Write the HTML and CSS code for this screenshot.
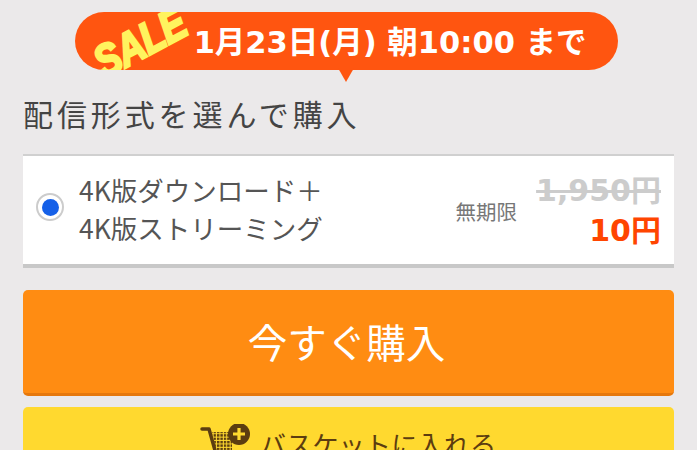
FILE: index.html
```html
<!DOCTYPE html>
<html lang="ja">
<head>
<meta charset="utf-8">
<title>購入</title>
<link rel="stylesheet" href="styles.css">
</head>
<body>
<div class="page">
  <div class="banner">
    <span class="sale-wrap"><span class="sale">SALE</span></span>
    <span class="banner-text">1月23日(月) 朝10:00 まで</span>
  </div>
  <h2 class="heading">配信形式を選んで購入</h2>
  <div class="card">
    <span class="radio"><span class="radio-dot"></span></span>
    <div class="name"><div>4K版ダウンロード＋</div><div>4K版ストリーミング</div></div>
    <div class="period">無期限</div>
    <div class="prices"><div class="old">1,950円</div><div class="new">10円</div></div>
  </div>
  <div class="btn buy">今すぐ購入</div>
  <div class="btn basket">
    <svg class="cart" viewBox="0 0 52 44" width="52" height="44" aria-hidden="true">
      <defs>
        <pattern id="dots" width="3.4" height="3.4" patternUnits="userSpaceOnUse">
          <rect width="2.4" height="2.4" fill="#5c3d10"/>
        </pattern>
      </defs>
      <path d="M2 5h7l7 25h22" fill="none" stroke="#5c3d10" stroke-width="3.5" stroke-linecap="round" stroke-linejoin="round"/>
      <path d="M12 8h20v18H16z" fill="url(#dots)"/>
      <circle cx="18" cy="36" r="3.5" fill="#5c3d10"/><circle cx="34" cy="36" r="3.5" fill="#5c3d10"/>
      <circle cx="39" cy="10" r="11" fill="#5c3d10"/>
      <path d="M39 4v12M33 10h12" stroke="#ffd92f" stroke-width="3.2"/>
    </svg>
    <span>バスケットに入れる</span>
  </div>
</div>
</body>
</html>
```
FILE: styles.css
```css
html, body { margin: 0; padding: 0; height: 450px; overflow: hidden; background: #ebe9ea; }
body { font-family: "Noto Sans CJK JP", "Noto Sans", sans-serif; color: #444; }
.page { padding: 12px 23px 0; display: flex; flex-direction: column; }
.banner {
  position: relative; align-self: center; width: 543px; height: 58px; margin-left: -5px;
  background: #ff5510; border-radius: 29px; color: #fff; font-weight: 700; font-size: 30.5px;
  display: flex; align-items: center; justify-content: flex-end; padding: 0 31px 2px 0; box-sizing: border-box;
  font-family: "DejaVu Sans", "Noto Sans CJK JP", sans-serif;
}
.banner::after {
  content: ""; position: absolute; left: 263px; top: 56px;
  border-left: 8px solid transparent; border-right: 8px solid transparent; border-top: 14px solid #ff5510;
}
.banner-text { white-space: nowrap; }
.sale-wrap { position: absolute; left: 0; top: 0; width: 130px; height: 58px; overflow: hidden; border-bottom-left-radius: 29px; }
.sale {
  position: absolute; left: 7px; top: 9px; color: #fff35e; font: italic 700 45px/44px "Liberation Sans", sans-serif;
  transform: rotate(-28deg) scaleX(.84); transform-origin: 50% 50%; letter-spacing: -1px; -webkit-text-stroke: 2.6px #fff35e;
}
.heading { margin: 15px 0 0; height: 56px; font-weight: 400; font-size: 30px; line-height: 56px; color: #444; letter-spacing: 3.9px; white-space: nowrap; }
.card {
  height: 114px; box-sizing: border-box; background: #fff; margin-top: 13px;
  border-top: 2px solid #d0d0d0; border-bottom: 4px solid #c8c8c8;
  display: flex; align-items: center; padding: 0 13px;
}
.radio {
  width: 28px; height: 28px; box-sizing: border-box; border: 2px solid #ccc; border-radius: 50%;
  background: #fff; display: flex; align-items: center; justify-content: center; flex: none; margin-top: -6px;
}
.radio-dot { width: 17px; height: 17px; border-radius: 50%; background: #1560e8; }
.name { margin-left: 15px; font-size: 26.5px; line-height: 38px; color: #555; flex: 1; white-space: nowrap; margin-top: -3px; }
.period { font-size: 20.5px; color: #777; margin-right: 19px; margin-top: 2px; }
.prices { text-align: right; font-family: "DejaVu Sans", "Noto Sans CJK JP", sans-serif; font-weight: 700; font-size: 30px; line-height: 40px; margin-top: 1px; }
.old { color: #ccc; text-decoration: line-through; }
.new { color: #ff4500; }
.btn { border-radius: 5px; display: flex; align-items: center; justify-content: center; box-sizing: border-box; }
.buy {
  height: 106px; margin-top: 22px; background: #ff8c12; border-bottom: 3px solid #e6780c;
  color: #fff; font-size: 39.5px; padding: 0 4px 2px 0;
}
.basket { height: 100px; margin-top: 11px; background: #ffd92f; color: #5c3d10; font-size: 26.3px; align-items: flex-start; padding: 17px 1px 0 0; gap: 8px; }
.cart { flex: none; }
```
